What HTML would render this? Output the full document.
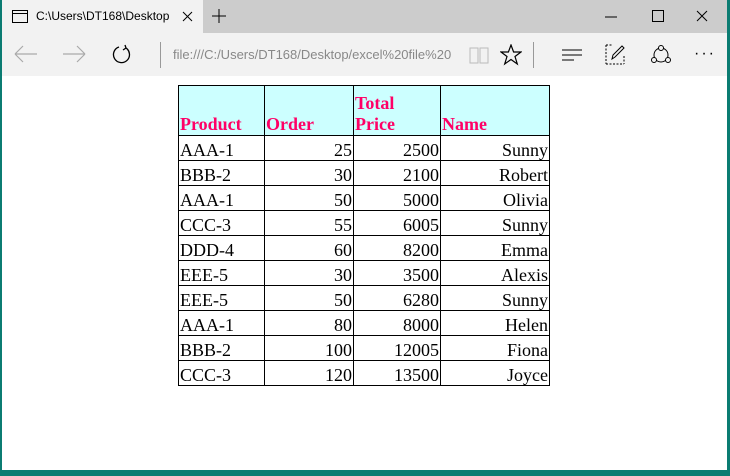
<!DOCTYPE html>
<html><head><style>
body{margin:0;width:730px;height:476px;overflow:hidden;background:#0b7c72;position:relative;font-family:"Segoe UI","Liberation Sans",sans-serif}
#win{position:absolute;left:2px;top:0;width:725px;height:470px;background:#fff;overflow:hidden}
#tabs{position:absolute;left:0;top:0;width:725px;height:33px;background:#cccccc}
#tab{position:absolute;left:0;top:0;width:201px;height:33px;background:#f2f2f2}
#tb{position:absolute;left:0;top:33px;width:725px;height:43px;background:#f2f2f2}
.t{position:absolute;font-size:12px;color:#000;white-space:nowrap}
svg{position:absolute}
table{position:absolute;left:176px;top:85px;border-collapse:collapse;font-family:"Liberation Serif",serif;font-size:18px}
td{border:1px solid #000;padding:0 0 0 1px;height:24px;line-height:20px;vertical-align:bottom}
th{border:1px solid #000;background:#ccffff;color:#ff0066;text-align:left;vertical-align:bottom;padding:0 0 0 1px;height:49px;line-height:21px;font-size:18px}
td.r{text-align:right;padding:0 1px 0 0}
</style></head><body>
<div id="win">
<div id="tabs"></div>
<div id="tab"></div>
<svg style="left:10px;top:10px" width="16" height="13"><rect x="0.5" y="0.5" width="15" height="12" fill="none" stroke="#000"/><line x1="0" y1="3.5" x2="16" y2="3.5" stroke="#000"/></svg>
<div class="t" style="left:34px;top:9px;width:136px;overflow:hidden">C:\Users\DT168\Desktop</div>
<svg style="left:180px;top:11px" width="11" height="11"><path d="M1 1L10 10M10 1L1 10" stroke="#000" stroke-width="1"/></svg>
<svg style="left:210px;top:9px" width="14" height="14"><path d="M7 0V14M0 7H14" stroke="#000" stroke-width="1"/></svg>
<svg style="left:603px;top:16px" width="12" height="2"><path d="M0 1H12" stroke="#000"/></svg>
<svg style="left:650px;top:10px" width="12" height="12"><rect x="0.5" y="0.5" width="11" height="11" fill="none" stroke="#000"/></svg>
<svg style="left:694px;top:10px" width="12" height="12"><path d="M1 1L11 11M11 1L1 11" stroke="#000"/></svg>
<div id="tb"></div>
<svg style="left:12px;top:45px" width="24" height="18"><path d="M1 9H23M1 9L9 1M1 9L9 17" stroke="#aaa" fill="none" stroke-width="1.2"/></svg>
<svg style="left:60px;top:45px" width="24" height="18"><path d="M1 9H23M23 9L15 1M23 9L15 17" stroke="#aaa" fill="none" stroke-width="1.2"/></svg>
<svg style="left:109px;top:44px" width="22" height="22"><path d="M8 3A8 8 0 1 0 15 4M14 1L15 4L12 6" stroke="#000" fill="none" stroke-width="1.3"/></svg>
<div style="position:absolute;left:158px;top:42px;width:1px;height:26px;background:#999"></div>
<div class="t" style="left:171px;top:47px;color:#888;font-size:13px">file:///C:/Users/DT168/Desktop/excel%20file%20</div>
<svg style="left:467px;top:46px" width="20" height="18"><path d="M1 2H9V17H1ZM11 2H19V17H11Z" stroke="#bbb" fill="none"/></svg>
<svg style="left:498px;top:44px" width="22" height="22"><path d="M11 1L13.6 8H21L15 12.5L17.3 20L11 15.5L4.7 20L7 12.5L1 8H8.4Z" stroke="#000" fill="none" stroke-width="1.2"/></svg>
<div style="position:absolute;left:531px;top:42px;width:1px;height:26px;background:#999"></div>
<svg style="left:560px;top:49px" width="20" height="12"><path d="M0 1H20M0 6H20M0 11H12" stroke="#000"/></svg>
<svg style="left:603px;top:44px" width="20" height="22"><path d="M1 1H8M1 20H19M1 1V20M19 12V20" stroke="#000" stroke-dasharray="2 1.5" fill="none"/><path d="M7 15L8 11L17 2L19 4L10 13Z" stroke="#000" fill="none"/></svg>
<svg style="left:647px;top:44px" width="24" height="22"><circle cx="12" cy="11" r="7" stroke="#000" fill="none"/><circle cx="12" cy="4" r="2.5" fill="#f2f2f2" stroke="#000"/><circle cx="5" cy="16" r="2.5" fill="#f2f2f2" stroke="#000"/><circle cx="19" cy="16" r="2.5" fill="#f2f2f2" stroke="#000"/></svg>
<div class="t" style="left:692px;top:45px;font-size:16px;letter-spacing:2px">···</div>
<table>
<tr><th style="width:84px">Product</th><th style="width:87px">Order</th><th style="width:85px">Total<br>Price</th><th style="width:107px">Name</th></tr>
<tr><td>AAA-1</td><td class="r">25</td><td class="r">2500</td><td class="r">Sunny</td></tr>
<tr><td>BBB-2</td><td class="r">30</td><td class="r">2100</td><td class="r">Robert</td></tr>
<tr><td>AAA-1</td><td class="r">50</td><td class="r">5000</td><td class="r">Olivia</td></tr>
<tr><td>CCC-3</td><td class="r">55</td><td class="r">6005</td><td class="r">Sunny</td></tr>
<tr><td>DDD-4</td><td class="r">60</td><td class="r">8200</td><td class="r">Emma</td></tr>
<tr><td>EEE-5</td><td class="r">30</td><td class="r">3500</td><td class="r">Alexis</td></tr>
<tr><td>EEE-5</td><td class="r">50</td><td class="r">6280</td><td class="r">Sunny</td></tr>
<tr><td>AAA-1</td><td class="r">80</td><td class="r">8000</td><td class="r">Helen</td></tr>
<tr><td>BBB-2</td><td class="r">100</td><td class="r">12005</td><td class="r">Fiona</td></tr>
<tr><td>CCC-3</td><td class="r">120</td><td class="r">13500</td><td class="r">Joyce</td></tr>
</table>
</div>
</body></html>
